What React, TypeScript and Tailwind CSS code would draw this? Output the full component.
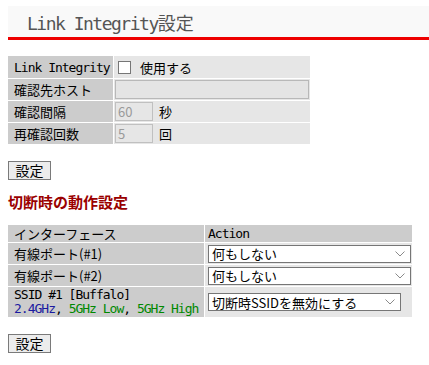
import React from 'react'

const jp = 'font-["Noto_Sans_CJK_JP",sans-serif]'
const mono = 'font-["DejaVu_Sans_Mono","Noto_Sans_CJK_JP",monospace]'

function Chevron() {
  return (
    <svg width="10" height="6" viewBox="0 0 10 6" className="shrink-0">
      <path d="M0.5 0.5 L5 5 L9.5 0.5" fill="none" stroke="#8a8a8a" strokeWidth="1" />
    </svg>
  )
}

function FakeSelect({ label, w }: { label: string; w: string }) {
  return (
    <div className={`${w} h-[18px] bg-white border border-[#767676] flex items-center justify-between pl-[3px] pr-[5px] text-[13px] leading-none text-black ${jp}`}>
      <span>{label}</span>
      <Chevron />
    </div>
  )
}

function Btn() {
  return (
    <button className={`w-[43px] h-[19px] bg-[#ececec] border border-[#7a7a7a] text-[14px] leading-none text-black ${jp}`}>
      設定
    </button>
  )
}

export default function App() {
  const cell = 'bg-[#cccccc] pl-[6px] text-[13px] leading-none text-black'
  const label = `${cell} ${jp}`
  const value = 'bg-[#e6e6e6] px-[1px]'

  return (
    <div className="pl-2 pt-[6px] bg-white min-h-[365px]">
      <div className="h-[34px] bg-[#f9f9f9] border-b-[3px] border-[#ee0000] flex items-center pl-[19px]">
        <span className="text-[18px] leading-none text-[#555555] mt-[2px]">
          <span className={`${mono} tracking-[-1.5px]`}>Link Integrity</span>
          <span className={jp}>設定</span>
        </span>
      </div>

      <table className="mt-[15px] -ml-[1px] border-separate border-spacing-[1px] w-[304px]">
        <tbody>
          <tr className="h-[22px]">
            <td className={`${cell} w-[105px] ${mono} tracking-[-1px]`}>Link Integrity</td>
            <td className={value}>
              <div className={`flex items-center gap-[9px] pl-[3px] text-[13px] leading-none text-black ${jp}`}>
                <span className="w-[13px] h-[13px] bg-white border border-[#767676]" />
                <span>使用する</span>
              </div>
            </td>
          </tr>
          <tr className="h-[21px]">
            <td className={label}>確認先ホスト</td>
            <td className={value}>
              <div className="h-[19px] w-full border border-[#b8b8b8] bg-[#e4e4e4]" />
            </td>
          </tr>
          <tr className="h-[21px]">
            <td className={label}>確認間隔</td>
            <td className={value}>
              <div className={`flex items-center gap-[6px] text-[13px] leading-none ${jp}`}>
                <div className="w-[38px] h-[19px] border border-[#c0c0c0] bg-[#e6e6e6] flex items-center pl-[2px] text-[#9a9a9a]">60</div>
                <span className="text-black">秒</span>
              </div>
            </td>
          </tr>
          <tr className="h-[21px]">
            <td className={label}>再確認回数</td>
            <td className={value}>
              <div className={`flex items-center gap-[6px] text-[13px] leading-none ${jp}`}>
                <div className="w-[38px] h-[19px] border border-[#c0c0c0] bg-[#e6e6e6] flex items-center pl-[2px] text-[#9a9a9a]">5</div>
                <span className="text-black">回</span>
              </div>
            </td>
          </tr>
        </tbody>
      </table>

      <div className="mt-[13px]">
        <Btn />
      </div>

      <h2 className={`mt-[10px] text-[15px] leading-[20px] font-bold text-[#9a0000] ${jp}`}>切断時の動作設定</h2>

      <table className="mt-[12px] -ml-[1px] border-separate border-spacing-[1px] w-[406px]">
        <tbody>
          <tr className="h-[17px]">
            <td className={`${label} w-[196px]`}>インターフェース</td>
            <td className={`bg-[#cccccc] pl-[3px] text-[13px] leading-none text-black ${mono} tracking-[-1px]`}>Action</td>
          </tr>
          <tr className="h-[21px]">
            <td className={label}>有線ポート(#1)</td>
            <td className="bg-[#e6e6e6] pl-[3px] pr-[1px]">
              <FakeSelect label="何もしない" w="w-full" />
            </td>
          </tr>
          <tr className="h-[21px]">
            <td className={label}>有線ポート(#2)</td>
            <td className="bg-[#e6e6e6] pl-[3px] pr-[1px]">
              <FakeSelect label="何もしない" w="w-full" />
            </td>
          </tr>
          <tr className="h-[30px]">
            <td className={`bg-[#cccccc] pl-[6px] text-[13px] leading-[14px] ${mono} tracking-[-1px]`}>
              <div className="flex h-[14px] text-black">SSID #1 [Buffalo]</div>
              <div className="flex h-[14px] whitespace-pre">
                <span className="text-[#1a1aa0]">2.4GHz</span>
                <span className="text-black">, </span>
                <span className="text-[#008800]">5GHz Low</span>
                <span className="text-black">, </span>
                <span className="text-[#008800]">5GHz High</span>
              </div>
            </td>
            <td className="bg-[#e6e6e6] pl-[3px]">
              <FakeSelect label="切断時SSIDを無効にする" w="w-[193px]" />
            </td>
          </tr>
        </tbody>
      </table>

      <div className="mt-[13px]">
        <Btn />
      </div>
    </div>
  )
}
